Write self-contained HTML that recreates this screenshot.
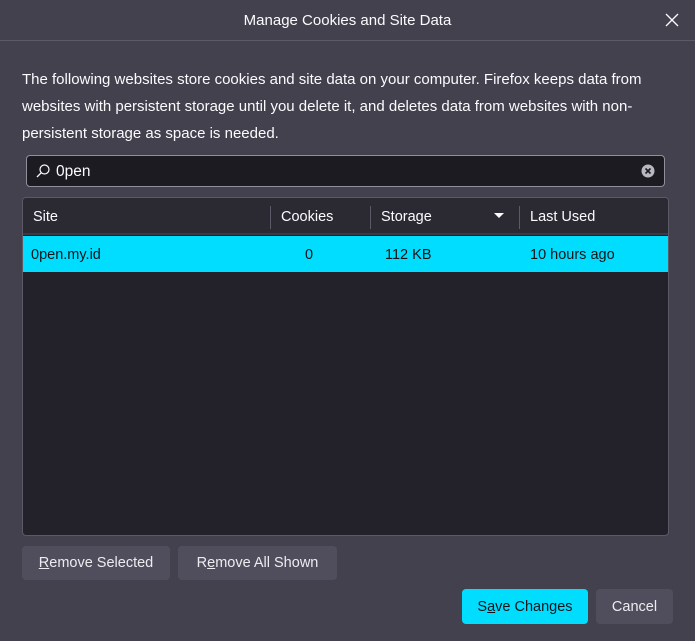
<!DOCTYPE html>
<html><head><style>
*{box-sizing:border-box;margin:0;padding:0}
body{width:695px;height:641px;background:#42414d;font-family:"Liberation Sans",sans-serif;color:#fbfbfe;position:relative;overflow:hidden;font-size:14.5px}
.t{position:absolute;left:0;right:0;top:12px;text-align:center;font-size:15px}
.x{position:absolute;left:664px;top:12px;width:16px;height:16px}
.sep{position:absolute;left:0;right:0;top:40px;height:1px;background:#5b5a66}
.p{position:absolute;left:22px;top:66px;width:645px;line-height:27px;font-size:15px}
.s{position:absolute;left:26px;top:155px;width:639px;height:32px;background:#1c1b22;border:1px solid #8f8f9d;border-radius:4px}
.tb{position:absolute;left:22px;top:197px;width:647px;height:339px;background:#23222b;border:1px solid #5b5a66;border-radius:4px;overflow:hidden}
.hd{position:absolute;left:0;top:0;width:100%;height:37px;background:#2b2a33;border-bottom:2px solid #3a3944}
.hd span,.r span{position:absolute;top:11px}
.dv{position:absolute;top:8px;width:1px;height:23px;background:#5b5a66}
.r{position:absolute;left:0;top:38px;width:100%;height:36px;background:#00ddff;color:#15141a}
.b{position:absolute;height:34px;background:#52505e;border-radius:4px;text-align:center;line-height:35px;font-size:14.5px;opacity:.92}
u{text-decoration:underline}
</style></head><body>
<div class="t">Manage Cookies and Site Data</div>
<svg class="x" viewBox="0 0 16 16"><path d="M2 2L14 14M14 2L2 14" stroke="#fbfbfe" stroke-width="1.3"/></svg>
<div class="sep"></div>
<div class="p">The following websites store cookies and site data on your computer. Firefox keeps data from websites with persistent storage until you delete it, and deletes data from websites with non-persistent storage as space is needed.</div>
<div class="s">
<svg style="position:absolute;left:8px;top:7px" width="16" height="16" viewBox="0 0 16 16"><circle cx="9.5" cy="6.5" r="4.5" fill="none" stroke="#fbfbfe" stroke-width="1.2"/><path d="M6.3 9.7L2 14" stroke="#fbfbfe" stroke-width="1.3"/></svg>
<span style="position:absolute;left:29px;top:7px;font-size:15.5px">0pen</span>
<svg style="position:absolute;left:614px;top:8px" width="14" height="14" viewBox="0 0 14 14"><circle cx="7" cy="7" r="6.5" fill="#b8b8c0"/><path d="M4.5 4.5L9.5 9.5M9.5 4.5L4.5 9.5" stroke="#1c1b22" stroke-width="1.6"/></svg>
</div>
<div class="tb">
<div class="hd"><span style="left:10px">Site</span><div class="dv" style="left:247px"></div><span style="left:258px">Cookies</span><div class="dv" style="left:347px"></div><span style="left:358px">Storage</span>
<svg style="position:absolute;left:471px;top:15px" width="10" height="6"><path d="M0 0H10L5 5Z" fill="#fbfbfe"/></svg>
<div class="dv" style="left:496px"></div><span style="left:507px">Last Used</span></div>
<div class="r"><span style="left:8px">0pen.my.id</span><span style="left:282px">0</span><span style="left:362px">112 KB</span><span style="left:507px">10 hours ago</span></div>
</div>
<div class="b" style="left:22px;top:546px;width:148px"><u>R</u>emove Selected</div>
<div class="b" style="left:178px;top:546px;width:159px">R<u>e</u>move All Shown</div>
<div class="b" style="left:462px;top:589px;width:126px;height:35px;line-height:36px;background:#00ddff;color:#15141a;opacity:1">S<u>a</u>ve Changes</div>
<div class="b" style="left:596px;top:589px;width:77px;height:35px;line-height:36px">Cancel</div>
</body></html>
